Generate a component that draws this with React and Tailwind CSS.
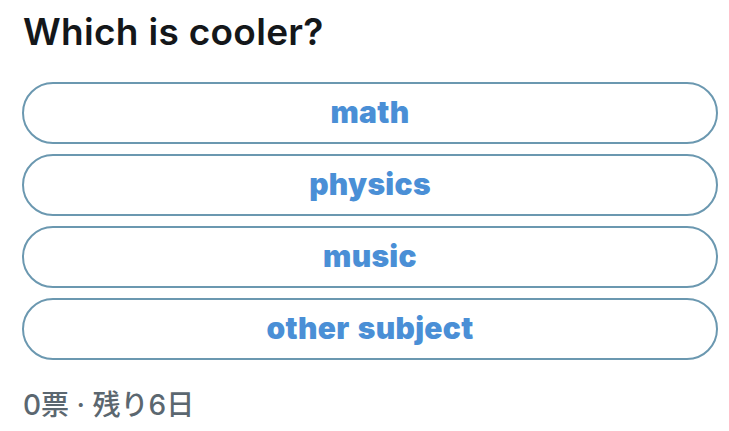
export default function App() {
  const opts = ["math", "physics", "music", "other subject"];
  return (
    <div className="w-[729px] h-[431px] bg-white overflow-hidden" style={{ fontFamily: "Inter, 'Noto Sans CJK JP', sans-serif" }}>
      <div className="pl-[22px] pr-[11px] pt-[10px]">
        <div className="text-[37px] font-semibold text-[#14171a] leading-[44px] tracking-[0.3px] pl-[1px]">Which is cooler?</div>
        <div className="mt-[28px] flex flex-col gap-[10px]">
          {opts.map((o) => (
            <div key={o} className="h-[62px] rounded-full border-2 border-[#6b98b0] flex items-center justify-center text-[30px] font-black tracking-[0.3px] [word-spacing:2px] text-[#4a8fd6] pb-[2px]">
              {o}
            </div>
          ))}
        </div>
        <div className="mt-[28px] text-[28px] font-medium text-[#5b6770] leading-[34px] pl-[1px]">0票 · 残り6日</div>
      </div>
    </div>
  );
}
